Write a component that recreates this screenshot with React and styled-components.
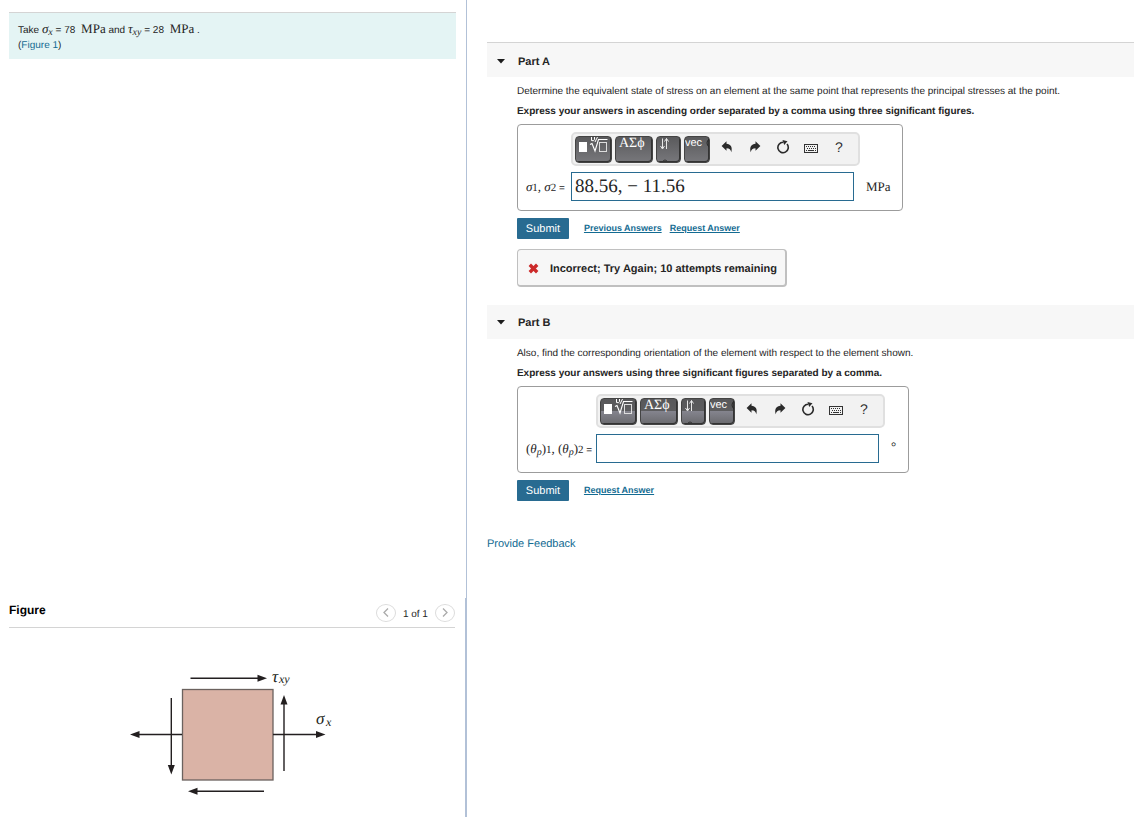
import React from 'react';
import styled, { createGlobalStyle } from 'styled-components';

const SANS = '"Liberation Sans", Arial, sans-serif';
const SERIF = '"Liberation Serif", "Times New Roman", serif';

const COLORS = {
  TEXT: '#252525',
  LINK: '#136b92',
  BLUE: '#286b91',
  DIVIDER: '#b2c1d7',
  RULE: '#d4d4d4',
  PANEL: '#f7f7f7',
  HINT: '#e4f4f4'
};

const GlobalStyle = createGlobalStyle`
  * {
    box-sizing: border-box;
  }
  body {
    margin: 0;
    background: #fff;
    color: ${COLORS.TEXT};
    font-family: ${SANS};
    font-size: 10px;
    text-rendering: geometricPrecision;
  }
  button, input {
    text-rendering: inherit;
  }
  p, h2 {
    margin: 0;
  }
`;

const Page = styled.div`
  display: grid;
  grid-template-columns: 41fr 59fr;
  min-height: 100vh;
`;

const LeftPane = styled.aside`
  display: flex;
  flex-direction: column;
`;

const ProblemArea = styled.div`
  flex: 1;
  margin-right: -2px;
  padding: 12px 10px 0 9px;
  border-right: 1px solid ${COLORS.DIVIDER};
`;

const ProblemText = styled.div`
  padding: 10px 9px 6px;
  border-top: 1px solid ${COLORS.RULE};
  background: ${COLORS.HINT};
  line-height: 15px;
`;

const TextLink = styled.a`
  color: ${COLORS.LINK};
  text-decoration: none;
`;

const Unit = styled.span`
  font-family: ${SERIF};
  font-size: 13px;
  line-height: 12px;
  margin-left: ${props => (props.$spaced ? '3px' : '0')};
`;

const MathText = styled.span`
  font-family: ${SERIF};
  font-size: 13px;
  line-height: 12px;
  font-style: italic;
  sub {
    font-size: 10px;
    line-height: 0;
    vertical-align: -2px;
  }
`;

const Upright = styled.span`
  font-style: normal;
`;

const Digit = styled(Upright)`
  font-size: 11px;
`;

const FigurePanel = styled.section`
  padding: 0 10px 17px 9px;
  margin-right: -2px;
  border-right: 2px solid ${COLORS.DIVIDER};
`;

const FigureHeader = styled.div`
  display: flex;
  align-items: center;
  justify-content: space-between;
  height: 30px;
  border-bottom: 1px solid ${COLORS.RULE};
`;

const FigureTitle = styled.h2`
  font-size: 12px;
  padding-bottom: 6px;
  color: #000;
`;

const Pager = styled.nav`
  display: flex;
  align-items: center;
  gap: 7px;
`;

const PageCount = styled.span`
  padding-top: 3px;
`;

const PagerButton = styled.button`
  display: flex;
  align-items: center;
  justify-content: center;
  width: 20px;
  height: 18px;
  padding: 0;
  border: 1px solid #dcdcdc;
  border-radius: 50%;
  background: #fff;
`;

const FigureDrawing = styled.svg`
  display: block;
  width: 230px;
  height: 140px;
  margin: 32px 0 0 111px;
`;

const RightPane = styled.main`
  padding: 42px 0 20px 22px;
`;

const PartHeader = styled.div`
  display: flex;
  align-items: center;
  gap: 13px;
  height: ${props => (props.$ruled ? '35px' : '34px')};
  padding: ${props => (props.$ruled ? '2px 0 0 10px' : '0 0 0 10px')};
  border-top: ${props => (props.$ruled ? `1px solid ${COLORS.RULE}` : 'none')};
  background: ${COLORS.PANEL};
`;

const PartTitle = styled.h2`
  padding-top: 1px;
  font-size: 11px;
`;

const PartBody = styled.div`
  padding: 5px 0 18px 30px;
  line-height: 20px;
`;

const Instruction = styled.p`
  font-weight: 700;
`;

const AnswerBox = styled.div`
  display: grid;
  grid-template-columns: ${props => props.$labelWidth} 289px ${props => props.$unitWidth};
  row-gap: 6px;
  align-items: center;
  width: fit-content;
  height: 87px;
  padding: 7px 0 9px 8px;
  margin-top: 2px;
  border: 1px solid #9c9c9c;
  border-radius: 4px;
`;

const Toolbar = styled.div`
  grid-column: 2;
  display: flex;
  align-items: center;
  height: 34px;
  padding: 0 2px;
  border: 2px solid #e0e0e0;
  border-radius: 5px;
  background: #f2f2f2;
`;

const DarkButton = styled.button`
  width: ${props => props.$width};
  height: 27px;
  padding: 0;
  margin-right: 3px;
  overflow: hidden;
  border: 1px solid #444;
  border-radius: 4px;
  background: ${props => (props.$split
    ? 'linear-gradient(#58585a 0, #5c5c5e 46%, #85858f 47%, #6a6a6e 100%)'
    : 'linear-gradient(#5a5a5c, #77777b)')};
  box-shadow: inset -1px -1px 0 #333;
  color: #fff;
  font-family: ${props => (props.$serif ? SERIF : SANS)};
  font-size: ${props => (props.$serif ? '14px' : '11px')};
  line-height: 12px;
  text-align: left;
  svg {
    display: block;
  }
`;

const ButtonText = styled.span`
  display: flex;
  justify-content: space-between;
  height: ${props => (props.$high ? '25px' : '22px')};
  padding-left: ${props => props.$inset};
`;

const IconButton = styled.button`
  display: flex;
  align-items: center;
  justify-content: center;
  width: 28px;
  height: 28px;
  padding: 0 0 4px;
  border: 0;
  background: none;
  color: #2b2b2b;
  font-family: ${SANS};
  font-size: 14px;
`;

const KeyboardButton = styled(IconButton)`
  padding-bottom: 2px;
`;

const AnswerLabel = styled.label`
  grid-column: 1;
  padding-top: 4px;
  white-space: nowrap;
`;

const AnswerInput = styled.input`
  width: 283px;
  height: 29px;
  padding: 0 3px;
  border: 1px solid ${COLORS.BLUE};
  background: #fff;
  color: ${COLORS.TEXT};
  font-family: ${SERIF};
  font-size: 19px;
  outline: none;
`;

const AnswerUnit = styled(Unit)`
  padding-left: 6px;
  padding-bottom: ${props => (props.$raised ? '4px' : '0')};
`;

const Actions = styled.div`
  display: flex;
  align-items: center;
  gap: 8px;
  margin-top: 7px;
`;

const SubmitButton = styled.button`
  width: 52px;
  height: 21px;
  padding: 0;
  margin-right: 7px;
  border: 0;
  border-radius: 1px;
  background: ${COLORS.BLUE};
  color: #fff;
  font-family: ${SANS};
  font-size: 11px;
`;

const ActionLink = styled.a`
  padding-bottom: 1px;
  color: ${COLORS.LINK};
  font-size: 9px;
  font-weight: 700;
`;

const Feedback = styled.div`
  display: flex;
  align-items: center;
  gap: 11px;
  width: fit-content;
  height: 38px;
  padding: 2px 8px 0 10px;
  margin-top: 10px;
  border: 1px solid #c0c0c0;
  border-right-width: 2px;
  border-bottom-width: 2px;
  border-radius: 4px;
  background: ${COLORS.PANEL};
  font-size: 11px;
  font-weight: 700;
`;

const FeedbackLink = styled(TextLink)`
  display: inline-block;
  margin-top: 19px;
  font-size: 11px;
`;

const Caret = () => (
  <svg width="8" height="5" viewBox="0 0 8 5" aria-hidden="true">
    <path d="M0 0h8L4 4.6z" fill="#1c1c1c" />
  </svg>
);

const TemplateIcon = () => (
  <svg width="34" height="25" viewBox="0 0 34 25" fill="none" stroke="#fff">
    <rect x="3" y="5" width="8" height="10" fill="#fff" stroke="none" />
    <path d="M14 7.500l2-1 3 7.500 3.500-11.500h9" strokeWidth="1.100" />
    <path d="M15.500 0v3.500q2.500 1 3-1V0M19 5l2.500-5" strokeWidth="1" />
    <rect x="23.500" y="5.500" width="7" height="9" stroke="#ddd" />
  </svg>
);

const ArrowsIcon = () => (
  <svg width="23" height="25" viewBox="0 0 23 25" fill="none" stroke="#e8e8e8" strokeWidth="1">
    <path d="M5.500 1.500v10M3.500 9l2 3 2-3M9.500 12V1.500M7.500 4.500l2-3 2 3" />
    <path d="M5 25q3-4 6 0" stroke="#333" />
  </svg>
);

const VectorMark = () => (
  <svg width="4" height="13" viewBox="0 0 4 13" fill="none" stroke="#2a2a2a" aria-hidden="true">
    <path d="M4 2q-4 4 0 8" />
  </svg>
);

const UndoIcon = ({ flipped }) => (
  <svg width="12" height="12" viewBox="0 0 12 12">
    <path
        d="M5.500.3v2.500c4 .2 6.300 3.200 4.800 8.400C9.700 8.700 8.500 7.200 5.500 7.200v2.500L.6 5z"
        fill="#2b2b2b"
        transform={flipped ? 'matrix(-1 0 0 1 12 0)' : undefined} />
  </svg>
);

const ResetIcon = () => (
  <svg width="14" height="14" viewBox="0 0 14 14">
    <path d="M11 4.100A5.200 5.200 0 1 1 7.200 2.300" fill="none" stroke="#2b2b2b" strokeWidth="1.600" />
    <path d="M6.500 0l5 1.300-3.300 3.700z" fill="#2b2b2b" />
  </svg>
);

const KeyboardIcon = () => (
  <svg width="14" height="9" viewBox="0 0 14 9" fill="none" stroke="#333">
    <rect x=".5" y=".5" width="13" height="8" />
    <path d="M2 2.500h10M3 4.500h9" strokeDasharray="1 1" />
    <path d="M2 6.500h1m1 0h6m1 0h1" />
  </svg>
);

const WrongIcon = () => (
  <svg width="11" height="11" viewBox="0 0 11 11" aria-hidden="true">
    <path d="M1.800 1.800l7.400 7.400M9.200 1.800l-7.400 7.400" stroke="#cc2a2a" strokeWidth="3.400" />
  </svg>
);

const Chevron = ({ d }) => (
  <svg width="6" height="9" viewBox="0 0 6 9" fill="none" stroke="#aaa" strokeWidth="1.300">
    <path d={d} />
  </svg>
);

const MathToolbar = ({ split }) => (
  <Toolbar role="toolbar" aria-label="Equation tools">
    <DarkButton type="button" $width="37px" $split={split} aria-label="Templates">
      <TemplateIcon />
    </DarkButton>
    <DarkButton type="button" $width="38px" $split={split} $serif>
      <ButtonText $inset="3px">ΑΣϕ</ButtonText>
    </DarkButton>
    <DarkButton type="button" $width="25px" $split={split} aria-label="Subscripts and superscripts">
      <ArrowsIcon />
    </DarkButton>
    <DarkButton type="button" $width="26px" $split={split}>
      <ButtonText $inset="0" $high>vec<VectorMark /></ButtonText>
    </DarkButton>
    <IconButton type="button" aria-label="Undo"><UndoIcon /></IconButton>
    <IconButton type="button" aria-label="Redo"><UndoIcon flipped /></IconButton>
    <IconButton type="button" aria-label="Reset"><ResetIcon /></IconButton>
    <KeyboardButton type="button" aria-label="Keyboard shortcuts"><KeyboardIcon /></KeyboardButton>
    <IconButton type="button">?</IconButton>
  </Toolbar>
);

const StressElement = () => (
  <FigureDrawing viewBox="120 660 230 140" role="img" aria-label="Stress element">
    <rect x="182.500" y="689.500" width="90.500" height="90.500" fill="#dab3a6" stroke="#6b625e" strokeWidth="1.300" />
    <g stroke="#231f20" strokeWidth="1.400">
      <path d="M190.500 678.300H260M264 791.300H195M171.300 698v69M284 771v-68M182 734.500h-45M273 734.500h46" />
    </g>
    <g fill="#231f20">
      <path d="M267 678.300l-9.500-3.500v7zM188 791.300l9.500-3.500v7zM171.300 774.500l-3.500-9.500h7zM284 695l-3.500 9.500h7zM130 734.500l9.500-3.500v7zM325.500 734.500l-9.500-3.500v7z" />
    </g>
    <g fontFamily={SERIF} fontStyle="italic" fill="#231f20">
      <text x="272" y="682" fontSize="17">τ</text>
      <text x="279" y="683" fontSize="12">xy</text>
      <text x="316" y="724" fontSize="17">σ</text>
      <text x="326" y="726" fontSize="12">x</text>
    </g>
  </FigureDrawing>
);

const Angle = ({ index }) => (
  <>
    <Upright>(</Upright>θ<sub>p</sub><Upright>)</Upright><Digit>{index}</Digit>
  </>
);

const App = () => (
  <Page>
    <GlobalStyle />
    <LeftPane>
      <ProblemArea>
        <ProblemText>
          <p>
            Take <MathText>σ<sub>x</sub></MathText> = 78 <Unit $spaced>MPa</Unit> and{' '}
            <MathText>τ<sub>xy</sub></MathText> = 28 <Unit $spaced>MPa</Unit> .
          </p>
          <p>(<TextLink href="#figure">Figure 1</TextLink>)</p>
        </ProblemText>
      </ProblemArea>
      <FigurePanel id="figure">
        <FigureHeader>
          <FigureTitle>Figure</FigureTitle>
          <Pager aria-label="Figures">
            <PagerButton type="button" aria-label="Previous figure"><Chevron d="M5 .5l-4 4 4 4" /></PagerButton>
            <PageCount>1 of 1</PageCount>
            <PagerButton type="button" aria-label="Next figure"><Chevron d="M1 .5l4 4-4 4" /></PagerButton>
          </Pager>
        </FigureHeader>
        <StressElement />
      </FigurePanel>
    </LeftPane>
    <RightPane>
      <PartHeader $ruled>
        <Caret />
        <PartTitle>Part A</PartTitle>
      </PartHeader>
      <PartBody>
        <p>
          Determine the equivalent state of stress on an element at the same point that represents the principal
          stresses at the point.
        </p>
        <Instruction>
          Express your answers in ascending order separated by a comma using three significant figures.
        </Instruction>
        <AnswerBox $labelWidth="45px" $unitWidth="42px">
          <MathToolbar />
          <AnswerLabel htmlFor="stresses">
            <MathText>σ<Digit>1</Digit>, σ<Digit>2</Digit></MathText> =
          </AnswerLabel>
          <AnswerInput id="stresses" defaultValue="88.56, − 11.56" />
          <AnswerUnit>MPa</AnswerUnit>
        </AnswerBox>
        <Actions>
          <SubmitButton type="button">Submit</SubmitButton>
          <ActionLink href="#previous">Previous Answers</ActionLink>
          <ActionLink href="#request-a">Request Answer</ActionLink>
        </Actions>
        <Feedback role="status">
          <WrongIcon />
          Incorrect; Try Again; 10 attempts remaining
        </Feedback>
      </PartBody>
      <PartHeader>
        <Caret />
        <PartTitle>Part B</PartTitle>
      </PartHeader>
      <PartBody>
        <p>Also, find the corresponding orientation of the element with respect to the element shown.</p>
        <Instruction>Express your answers using three significant figures separated by a comma.</Instruction>
        <AnswerBox $labelWidth="70px" $unitWidth="23px">
          <MathToolbar split />
          <AnswerLabel htmlFor="angles">
            <MathText><Angle index={1} />, <Angle index={2} /></MathText> =
          </AnswerLabel>
          <AnswerInput id="angles" />
          <AnswerUnit $raised>°</AnswerUnit>
        </AnswerBox>
        <Actions>
          <SubmitButton type="button">Submit</SubmitButton>
          <ActionLink href="#request-b">Request Answer</ActionLink>
        </Actions>
      </PartBody>
      <FeedbackLink href="#feedback">Provide Feedback</FeedbackLink>
    </RightPane>
  </Page>
);

export default App;
